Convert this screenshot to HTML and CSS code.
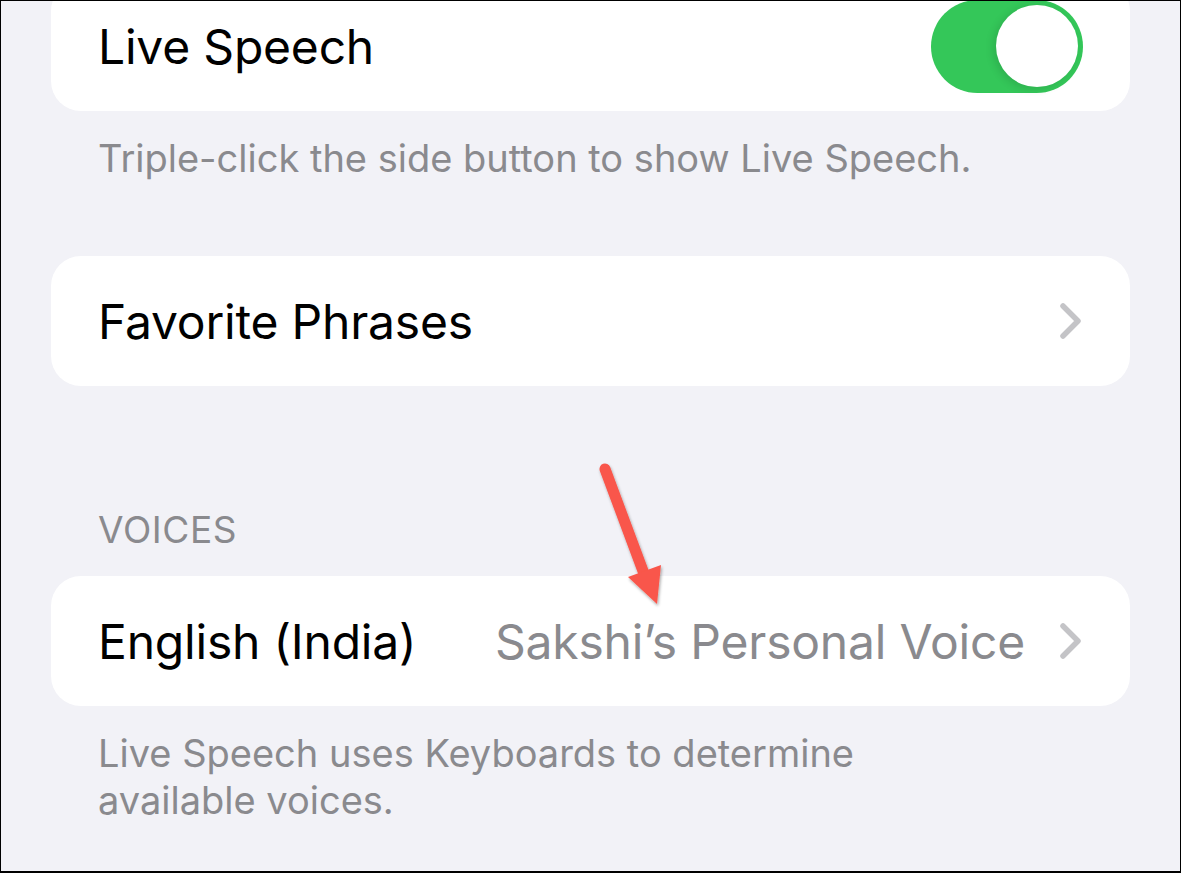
FILE: index.html
```html
<!DOCTYPE html>
<html lang="en">
<head>
    <meta charset="UTF-8">
    <title>Live Speech</title>
    <link rel="stylesheet" href="styles.css">
</head>
<body>
    <div class="screen">
        <!-- Live Speech switch -->
        <div class="group first">
            <div class="row">
                <span class="label">Live Speech</span>
                <span class="switch on"><span class="knob"></span></span>
            </div>
        </div>
        <p class="footer gap">Triple-click the side button to show Live Speech.</p>

        <!-- phrases -->
        <div class="group">
            <div class="row">
                <span class="label">Favorite Phrases</span>
                <svg class="chevron" width="24" height="38" viewBox="0 0 24 38"><path d="M4 4 L19 19 L4 34" /></svg>
            </div>
        </div>

        <!-- voices -->
        <p class="header">VOICES</p>
        <div class="group">
            <div class="row">
                <span class="label">English (India)</span>
                <span class="value">Sakshi’s Personal Voice</span>
                <svg class="chevron" width="24" height="38" viewBox="0 0 24 38"><path d="M4 4 L19 19 L4 34" /></svg>
            </div>
        </div>
        <p class="footer">Live Speech uses Keyboards to determine<br>available voices.</p>

        <!-- callout arrow -->
        <svg class="arrow" width="120" height="170" viewBox="0 0 120 170">
            <defs>
                <filter id="shade" x="-30%" y="-30%" width="160%" height="160%">
                    <feDropShadow dx="1" dy="2" stdDeviation="1.5" flood-color="#000" flood-opacity="0.35"/>
                </filter>
            </defs>
            <g filter="url(#shade)">
                <path d="M19 12 L57 114" stroke="#f9574b" stroke-width="11" stroke-linecap="round" fill="none"/>
                <path d="M42 120 L75 108 L71 147 Z" fill="#f9574b"/>
            </g>
        </svg>
    </div>
</body>
</html>
```

FILE: styles.css
```css
*{margin:0; padding:0; box-sizing:border-box;}
html, body{height:100%;}
body{
    background:#f2f2f7;
    font-family:Inter, "Liberation Sans", sans-serif;
    overflow:hidden;
}
.screen{
    position:relative;
    height:873px;
    padding:0 50px;
    border:1px solid #000;
    border-bottom-width:2px;
    overflow:hidden;
}
.group{
    background:#fff;
    border-radius:30px;
}
.group.first{margin-top:-20px;}
.row{
    height:130px;
    display:flex;
    align-items:center;
    padding:0 47px;
}
.label{
    font-size:48px;
    color:#000;
    letter-spacing:-0.2px;
    flex:1;
}
.value{
    font-size:48px;
    color:#8a8a8e;
    letter-spacing:-0.2px;
    margin-right:34px;
}
.chevron{display:block;}
.chevron path{fill:none; stroke:#c4c4c7; stroke-width:5.5; stroke-linecap:round; stroke-linejoin:round;}
.switch{
    width:152px;
    height:93px;
    border-radius:47px;
    background:#34c759;
    display:flex;
    align-items:center;
    padding:0 5px;
    justify-content:flex-end;
}
.knob{
    width:82px;
    height:82px;
    border-radius:50%;
    background:#fff;
    box-shadow:-3px 2px 8px rgba(0,0,0,0.12);
}
.footer{
    font-size:38px;
    color:#8a8a8e;
    line-height:47px;
    padding:24px 47px 0;
}
.footer.gap{margin-bottom:74px;}
.header{
    font-size:37px;
    line-height:45px;
    letter-spacing:0.6px;
    color:#8a8a8e;
    padding:121px 47px 24px;
}
.arrow{
    position:absolute;
    left:585px;
    top:456px;
}
```
